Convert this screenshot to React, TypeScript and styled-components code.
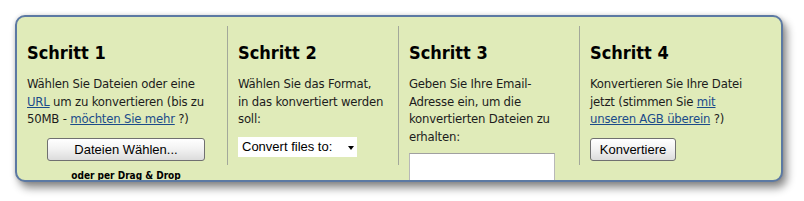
import React from "react";
import styled, { createGlobalStyle } from "styled-components";

const Global = createGlobalStyle`
  html, body { margin: 0; padding: 0; background: #ffffff; }
  body { font-family: "DejaVu Sans Condensed", "DejaVu Sans", Verdana, sans-serif; font-stretch: condensed; }
`;

const Page = styled.div`
  padding: 15px 0 0 15px;
  width: 804px;
  height: 201px;
  box-sizing: border-box;
`;

const Panel = styled.div`
  width: 768px;
  height: 167px;
  box-sizing: border-box;
  border: 2px solid #5c79a3;
  border-radius: 10px;
  background: #e0ebb9;
  box-shadow: 4px 6px 8px rgba(0, 0, 0, 0.45), 0 0 4px rgba(0, 0, 0, 0.15);
  overflow: hidden;
  display: flex;
  align-items: flex-start;
  padding-top: 9px;
`;

const Column = styled.div<{ $w: number; $divider?: boolean }>`
  width: ${(p) => p.$w}px;
  height: 139px;
  box-sizing: border-box;
  padding: 0 10px;
  border-left: ${(p) => (p.$divider ? "1px solid #a3a89a" : "none")};
  flex: none;
`;

const Heading = styled.h2`
  margin: 15px 0 0;
  font-family: "DejaVu Sans Condensed", "DejaVu Sans", Verdana, sans-serif;
  font-stretch: condensed;
  font-weight: bold;
  font-size: 18px;
  line-height: 24px;
  color: #000;
`;

const Text = styled.p`
  margin: 10px 0 0;
  font-size: 13px;
  line-height: 17.6px;
  letter-spacing: -0.2px;
  white-space: nowrap;
  color: #1c1c1c;
`;

const Link = styled.a`
  color: #1b4b8a;
  text-decoration: underline;
`;

const Center = styled.div`
  display: flex;
  flex-direction: column;
  align-items: center;
  padding-left: 8px;
`;

const Button = styled.button<{ $w: number }>`
  width: ${(p) => p.$w}px;
  height: 23px;
  margin-top: 10px;
  padding: 0;
  border: 1px solid #707070;
  border-radius: 3px;
  background: linear-gradient(#ffffff 0%, #f3f3f3 45%, #dcdcdc 100%);
  font-family: "Liberation Sans", Arial, sans-serif;
  font-size: 13px;
  color: #000;
`;

const DropNote = styled.div`
  margin-top: 9px;
  font-size: 10px;
  font-weight: bold;
  color: #000;
`;

const Select = styled.div`
  margin-top: 9px;
  width: 119px;
  height: 20px;
  background: #fff;
  display: flex;
  align-items: center;
  justify-content: space-between;
  padding: 0 3px 0 4px;
  box-sizing: border-box;
  font-family: "Liberation Sans", Arial, sans-serif;
  font-stretch: normal;
  font-size: 13px;
  color: #000;
`;

const Arrow = styled.span`
  width: 0;
  height: 0;
  border-left: 3px solid transparent;
  border-right: 3px solid transparent;
  border-top: 4px solid #000;
  margin-top: 2px;
`;

const Input = styled.input`
  display: block;
  margin-top: 8px;
  width: 146px;
  height: 28px;
  box-sizing: border-box;
  border: 1px solid #b8b8b8;
  border-top-color: #a0a0a0;
  background: #fff;
  padding: 0;
  outline: none;
`;

export default function App() {
  return (
    <>
      <Global />
      <Page>
        <Panel>
          <Column $w={210}>
            <Heading>Schritt 1</Heading>
            <Text>
              Wählen Sie Dateien oder eine
              <br />
              <Link href="#">URL</Link> um zu konvertieren (bis zu
              <br />
              50MB - <Link href="#">möchten Sie mehr</Link> ?)
            </Text>
            <Center>
              <Button $w={158}>Dateien Wählen...</Button>
              <DropNote>oder per Drag &amp; Drop</DropNote>
            </Center>
          </Column>
          <Column $w={171} $divider>
            <Heading>Schritt 2</Heading>
            <Text>
              Wählen Sie das Format,
              <br />
              in das konvertiert werden
              <br />
              soll:
            </Text>
            <Select>
              <span>Convert files to:</span>
              <Arrow />
            </Select>
          </Column>
          <Column $w={181} $divider>
            <Heading>Schritt 3</Heading>
            <Text>
              Geben Sie Ihre Email-
              <br />
              Adresse ein, um die
              <br />
              konvertierten Dateien zu
              <br />
              erhalten:
            </Text>
            <Input type="text" />
          </Column>
          <Column $w={202} $divider>
            <Heading>Schritt 4</Heading>
            <Text>
              Konvertieren Sie Ihre Datei
              <br />
              jetzt (stimmen Sie <Link href="#">mit</Link>
              <br />
              <Link href="#">unseren AGB überein</Link> ?)
            </Text>
            <Button $w={86}>Konvertiere</Button>
          </Column>
        </Panel>
      </Page>
    </>
  );
}
